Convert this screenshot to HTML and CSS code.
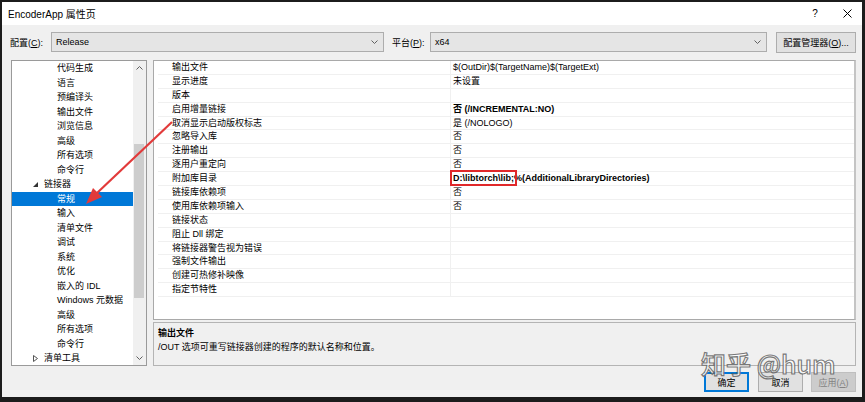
FILE: index.html
```html
<!DOCTYPE html>
<html lang="zh-CN">
<head>
  <meta charset="UTF-8" />
  <title>EncoderApp 属性页</title>
  <link rel="stylesheet" href="styles.css">
</head>
<body>
  <div class="window">
    <div class="titlebar">
      <span class="title">EncoderApp 属性页</span>
      <span class="help">?</span>
      <span class="close">
        <svg width="9" height="9" viewBox="0 0 9 9"><path d="M0.5 0.5L8.5 8.5M8.5 0.5L0.5 8.5" stroke="#000" stroke-width="1" fill="none"/></svg>
      </span>
    </div>

    <div class="dialog">
      <div class="config-row">
        <label class="lbl lbl-config">配置(<u>C</u>):</label>
        <div class="combo combo-config">
          <span>Release</span>
          <svg class="chev" width="7" height="4" viewBox="0 0 7 4"><path d="M0.5 0.5L3.5 3.5L6.5 0.5" stroke="#606060" fill="none"/></svg>
        </div>
        <label class="lbl lbl-plat">平台(<u>P</u>):</label>
        <div class="combo combo-plat">
          <span>x64</span>
          <svg class="chev" width="7" height="4" viewBox="0 0 7 4"><path d="M0.5 0.5L3.5 3.5L6.5 0.5" stroke="#606060" fill="none"/></svg>
        </div>
        <button class="btn btn-mgr">配置管理器(<u>O</u>)...</button>
      </div>

      <div class="main">
        <div class="tree">
          <div class="tree-list">
            <div class="node lv2">代码生成</div>
            <div class="node lv2">语言</div>
            <div class="node lv2">预编译头</div>
            <div class="node lv2">输出文件</div>
            <div class="node lv2">浏览信息</div>
            <div class="node lv2">高级</div>
            <div class="node lv2">所有选项</div>
            <div class="node lv2">命令行</div>
            <div class="node lv1">
              <svg class="twisty" width="5" height="5" viewBox="0 0 5 5"><path d="M5 0L5 5L0 5Z" fill="#333"/></svg>链接器
            </div>
            <div class="node lv2 selected">常规</div>
            <div class="node lv2">输入</div>
            <div class="node lv2">清单文件</div>
            <div class="node lv2">调试</div>
            <div class="node lv2">系统</div>
            <div class="node lv2">优化</div>
            <div class="node lv2">嵌入的 IDL</div>
            <div class="node lv2">Windows 元数据</div>
            <div class="node lv2">高级</div>
            <div class="node lv2">所有选项</div>
            <div class="node lv2">命令行</div>
            <div class="node lv1">
              <svg class="twisty" width="5" height="7" viewBox="0 0 5 7"><path d="M0.5 0.5L4.5 3.5L0.5 6.5Z" stroke="#555" fill="none"/></svg>清单工具
            </div>
          </div>
          <div class="vscroll">
            <svg class="sarrow" width="7" height="4" viewBox="0 0 7 4"><path d="M0.5 3.5L3.5 0.5L6.5 3.5" stroke="#606060" fill="none"/></svg>
            <div class="track"><div class="thumb"></div></div>
            <svg class="sarrow" width="7" height="4" viewBox="0 0 7 4"><path d="M0.5 0.5L3.5 3.5L6.5 0.5" stroke="#606060" fill="none"/></svg>
          </div>
        </div>

        <div class="props">
          <div class="grid">
            <div class="prow"><span class="pname">输出文件</span><span class="pval">$(OutDir)$(TargetName)$(TargetExt)</span></div>
            <div class="prow"><span class="pname">显示进度</span><span class="pval">未设置</span></div>
            <div class="prow"><span class="pname">版本</span><span class="pval"></span></div>
            <div class="prow"><span class="pname">启用增量链接</span><span class="pval bold">否 (/INCREMENTAL:NO)</span></div>
            <div class="prow"><span class="pname">取消显示启动版权标志</span><span class="pval">是 (/NOLOGO)</span></div>
            <div class="prow"><span class="pname">忽略导入库</span><span class="pval">否</span></div>
            <div class="prow"><span class="pname">注册输出</span><span class="pval">否</span></div>
            <div class="prow"><span class="pname">逐用户重定向</span><span class="pval">否</span></div>
            <div class="prow"><span class="pname">附加库目录</span><span class="pval bold"><span class="mark">D:\libtorch\lib;</span>%(AdditionalLibraryDirectories)</span></div>
            <div class="prow"><span class="pname">链接库依赖项</span><span class="pval">否</span></div>
            <div class="prow"><span class="pname">使用库依赖项输入</span><span class="pval">否</span></div>
            <div class="prow"><span class="pname">链接状态</span><span class="pval"></span></div>
            <div class="prow"><span class="pname">阻止 Dll 绑定</span><span class="pval"></span></div>
            <div class="prow"><span class="pname">将链接器警告视为错误</span><span class="pval"></span></div>
            <div class="prow"><span class="pname">强制文件输出</span><span class="pval"></span></div>
            <div class="prow"><span class="pname">创建可热修补映像</span><span class="pval"></span></div>
            <div class="prow"><span class="pname">指定节特性</span><span class="pval"></span></div>
          </div>
          <div class="desc">
            <div class="desc-title">输出文件</div>
            <div class="desc-text">/OUT 选项可重写链接器创建的程序的默认名称和位置。</div>
          </div>
        </div>
      </div>

      <div class="buttons">
        <button class="btn btn-ok">确定</button>
        <button class="btn btn-cancel">取消</button>
        <button class="btn btn-apply" disabled>应用(<u>A</u>)</button>
      </div>
    </div>

    <svg class="arrow" width="860" height="395" viewBox="2 2 860 395">
      <line x1="172" y1="122" x2="97" y2="193" stroke="#e23a3a" stroke-width="2.2"/>
      <polygon points="86,204 102,197 93,188" fill="#e23a3a"/>
    </svg>
    <div class="watermark">知乎 @hum</div>
  </div>
</body>
</html>
```

FILE: styles.css
```css
body {
  margin: 0;
  padding: 2px 3px 5px 2px;
  background: #1c1c1c;
  font-family: "Liberation Sans", "Noto Sans CJK SC", sans-serif;
  font-size: 9px;
  color: #000;
}
.window {
  position: relative;
  width: 860px;
  height: 395px;
  display: flex;
  flex-direction: column;
  background: #f0f0f0;
}
.titlebar {
  height: 23px;
  background: #fff;
  display: flex;
  align-items: center;
  padding-left: 6px;
}
.title {
  flex: 1;
  font-size: 10px;
}
.help {
  width: 30px;
  text-align: center;
  font-size: 10px;
  margin-right: 2px;
}
.close {
  width: 30px;
  display: flex;
  justify-content: center;
}
.dialog {
  flex: 1;
  display: flex;
  flex-direction: column;
  padding: 7px 6px 5px 8px;
}
.config-row {
  display: flex;
  align-items: center;
  height: 20px;
}
.lbl {
  white-space: nowrap;
}
.lbl-config {
  width: 41px;
}
.lbl-plat {
  width: 38px;
  margin-left: 8px;
}
.combo {
  height: 18px;
  border: 1px solid #adadad;
  background: #e5e5e5;
  display: flex;
  align-items: center;
  padding: 0 5px 0 4px;
  box-sizing: content-box;
}
.combo span {
  flex: 1;
}
.combo-config {
  width: 323px;
}
.combo-plat {
  width: 327px;
}
.btn {
  font-family: inherit;
  font-size: 9px;
  border: 1px solid #adadad;
  background: #e1e1e1;
  color: #000;
  padding: 0;
  height: 20px;
}
.btn-mgr {
  width: 80px;
  height: 21px;
  margin-left: 9px;
}
.main {
  display: flex;
  margin-top: 8px;
  height: 306px;
}
.tree {
  width: 136px;
  margin-left: 1px;
  box-sizing: border-box;
  border: 1px solid #9a9a9a;
  background: #fff;
  display: flex;
}
.tree-list {
  flex: 1;
}
.node {
  height: 14.5px;
  line-height: 14.5px;
  white-space: nowrap;
  display: flex;
  align-items: center;
}
.lv1 {
  padding-left: 21px;
}
.lv2 {
  padding-left: 45px;
}
.twisty {
  margin-right: 6px;
}
.selected {
  background: #0078d7;
  color: #fff;
}
.vscroll {
  width: 13px;
  background: #f0f0f0;
  display: flex;
  flex-direction: column;
  align-items: center;
}
.sarrow {
  margin: 5px 0;
}
.track {
  flex: 1;
  width: 100%;
  padding-top: 69px;
}
.thumb {
  height: 154px;
  margin: 0 2px 0 1px;
  background: #cdcdcd;
}
.props {
  flex: 1;
  margin-left: 6px;
  display: flex;
  flex-direction: column;
}
.grid {
  height: 260px;
  box-sizing: border-box;
  border: 1px solid #a9a9a9;
  border-right: 2px solid #c4c4c4;
  background: #fff;
}
.prow {
  display: grid;
  grid-template-columns: 292px 1fr;
  height: 13.9px;
  line-height: 13.9px;
  box-sizing: border-box;
  border-bottom: 1px solid #f0f0f0;
  margin-left: 4px;
  white-space: nowrap;
}
.pname {
  padding-left: 14px;
}
.pval {
  border-left: 1px solid #f0f0f0;
  padding-left: 2px;
}
.bold {
  font-weight: bold;
}
.mark {
  outline: 2px solid #e0282a;
  outline-offset: 1px;
}
.desc {
  margin-top: 2px;
  height: 44px;
  box-sizing: border-box;
  border: 1px solid #b4b4b4;
  padding: 3px 4px;
  line-height: 14px;
}
.desc-title {
  font-weight: bold;
}
.buttons {
  display: flex;
  justify-content: flex-end;
  margin-top: 6px;
}
.btn-ok,
.btn-cancel,
.btn-apply {
  width: 45px;
}
.btn-ok {
  border-color: #0078d7;
  box-shadow: inset 0 0 0 1px #0078d7;
}
.btn-cancel {
  margin-left: 9px;
}
.btn-apply {
  margin-left: 8px;
  background: #cccccc;
  border-color: #bfbfbf;
  color: #838383;
}
.arrow {
  position: absolute;
  left: 0;
  top: 0;
  pointer-events: none;
}
.watermark {
  position: absolute;
  left: 699px;
  top: 346px;
  font-family: "Noto Sans CJK SC", sans-serif;
  font-size: 25px;
  font-weight: 500;
  line-height: 30px;
  color: rgba(255, 255, 255, 0.85);
  -webkit-text-stroke: 1.2px rgba(80, 80, 80, 0.75);
  white-space: nowrap;
  pointer-events: none;
}
```
